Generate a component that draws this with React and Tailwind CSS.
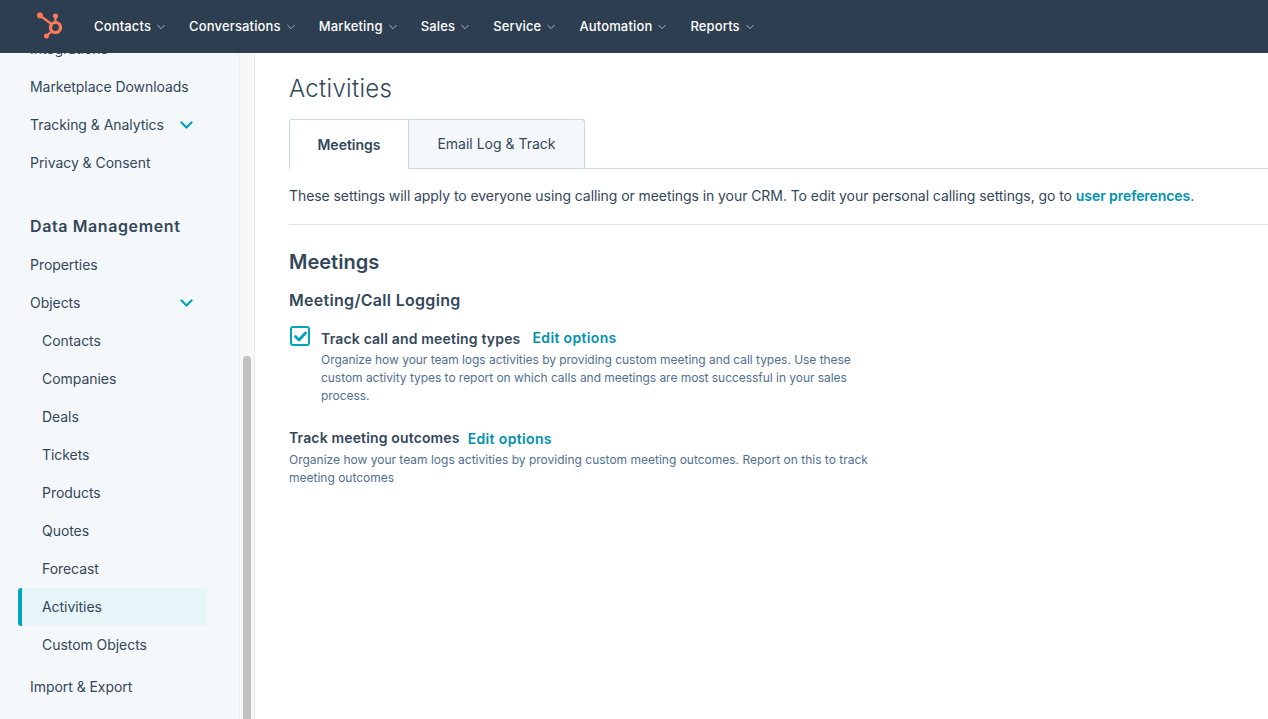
import React from 'react';

const navItems = ['Contacts', 'Conversations', 'Marketing', 'Sales', 'Service', 'Automation', 'Reports'];
const objectItems = ['Contacts', 'Companies', 'Deals', 'Tickets', 'Products', 'Quotes', 'Forecast'];

function Chevron({ className }) {
  return (
    <svg className={className} viewBox="0 0 12 8" fill="none">
      <path d="M1 1.5l5 5 5-5" stroke="currentColor" strokeLinecap="round" strokeLinejoin="round" strokeWidth={1.2} />
    </svg>
  );
}

function BoldChevron() {
  return (
    <svg className="w-[13px] h-[9px] text-[#00a4bd]" viewBox="0 0 13 9" fill="none">
      <path d="M1.5 1.5l5 5 5-5" stroke="currentColor" strokeLinecap="round" strokeLinejoin="round" strokeWidth={2.2} />
    </svg>
  );
}

function Logo() {
  return (
    <svg className="w-[30px] h-[30px] text-[#ff7a59]" viewBox="0 0 30 30" fill="none">
      <circle cx="20.5" cy="15.5" r="5" stroke="currentColor" strokeWidth="3.2" />
      <path d="M20.5 4v7M5 3.5l12 9M11.5 24l5.5-5" stroke="currentColor" strokeWidth="2.2" />
      <circle cx="20.5" cy="4" r="2.5" fill="currentColor" />
      <circle cx="5" cy="3.5" r="3" fill="currentColor" />
      <circle cx="11.5" cy="24" r="2.5" fill="currentColor" />
    </svg>
  );
}

function SideRow({ label, chevron }) {
  return (
    <div className="h-[38px] flex items-center justify-between pl-[30px] pr-[46px] text-sm tracking-[-0.05px] text-[#33475b]">
      <span>{label}</span>
      {chevron && <BoldChevron />}
    </div>
  );
}

function SubRow({ label, active }) {
  return (
    <div className={`h-[38px] w-[189px] ml-[18px] flex items-center text-sm tracking-[-0.05px] text-[#33475b] rounded-[3px] ${active ? 'bg-[#e5f5f8] border-l-4 border-[#00a4bd] pl-5' : 'pl-6'}`}>
      {label}
    </div>
  );
}

export default function App() {
  return (
    <div className="h-screen overflow-hidden flex flex-col bg-white font-['Inter',sans-serif] text-[#33475b]">
      <header className="h-[53px] shrink-0 bg-[#2d3e50] flex items-center pl-[35px] relative z-10">
        <Logo />
        <nav className="flex items-center gap-6 ml-[29px]">
          {navItems.map((item) => (
            <div key={item} className="flex items-center gap-[6px] text-[13px] font-medium tracking-[0.15px] text-white">
              {item}
              <Chevron className="w-2 h-[6px] text-[#cbd6e2] mt-px" />
            </div>
          ))}
        </nav>
      </header>

      <div className="flex flex-1 min-h-0">
        <aside className="w-[240px] shrink-0 bg-[#f5f8fa] border-r border-[#e8edf2] overflow-hidden">
          <div className="-mt-[23px]">
            <SideRow label="Integrations" />
            <SideRow label="Marketplace Downloads" />
            <SideRow label="Tracking & Analytics" chevron />
            <SideRow label="Privacy & Consent" />
            <div className="h-16 flex items-end pl-[30px] pb-2 text-base leading-6 tracking-[0.6px] font-semibold text-[#33475b]">Data Management</div>
            <SideRow label="Properties" />
            <SideRow label="Objects" chevron />
            {objectItems.map((item) => (
              <SubRow key={item} label={item} />
            ))}
            <SubRow label="Activities" active />
            <SubRow label="Custom Objects" />
            <div className="mt-1">
              <SideRow label="Import & Export" />
            </div>
          </div>
        </aside>

        <div className="w-[15px] shrink-0 bg-[#f7f7f7] border-r border-[#e6eaee] pt-[303px] px-[3px]">
          <div className="h-full w-2 bg-[#c1c1c1] rounded-t" />
        </div>

        <main className="flex-1 min-w-0 pl-[34px] pt-5">
          <h1 className="text-2xl leading-8 font-light tracking-[0.3px] text-[#33475b]">Activities</h1>

          <div className="flex mt-[14px] h-[50px] border-b border-[#cbd6e2]">
            <div className="w-[120px] h-[50px] flex items-center justify-center bg-white border border-b-0 border-[#cbd6e2] rounded-tl-[3px] text-sm font-semibold">
              Meetings
            </div>
            <div className="w-[176px] h-[49px] flex items-center justify-center bg-[#f5f8fa] border-t border-r border-[#cbd6e2] rounded-tr-[3px] text-sm">
              Email Log &amp; Track
            </div>
          </div>

          <p className="mt-[17px] text-sm leading-5 tracking-[-0.07px]">
            These settings will apply to everyone using calling or meetings in your CRM. To edit your personal calling settings, go to{' '}
            <a className="font-semibold text-[#0091ae]">user preferences</a>.
          </p>
          <div className="mt-[18px] border-t border-[#dfe3eb]" />

          <h2 className="mt-[23px] text-xl leading-7 font-semibold">Meetings</h2>
          <h3 className="mt-3 text-base leading-6 font-semibold tracking-[0.3px]">Meeting/Call Logging</h3>

          <div className="flex mt-[14px]">
            <div className="w-5 h-5 ml-px rounded-[3px] border-[2.5px] border-[#00a4bd] bg-white flex items-center justify-center shrink-0">
              <svg className="w-[13px] h-[11px] text-[#00a4bd]" viewBox="0 0 13 11" fill="none">
                <path d="M1.5 5.5l3.5 3.5 6.5-7" stroke="currentColor" strokeLinecap="round" strokeLinejoin="round" strokeWidth={2.8} />
              </svg>
            </div>
            <div className="ml-[11px] mt-[2px] w-[550px]">
              <div className="flex items-center h-[22px]">
                <span className="text-sm font-semibold tracking-[0.18px]">Track call and meeting types</span>
                <a className="ml-3 text-sm font-semibold tracking-[0.35px] text-[#0091ae] -mt-[2px]">Edit options</a>
              </div>
              <p className="mt-[1px] text-xs leading-[18px] tracking-[-0.04px] text-[#516f90]">
                Organize how your team logs activities by providing custom meeting and call types. Use these custom activity types to report on which calls and meetings are most successful in your sales process.
              </p>
            </div>
          </div>

          <div className="flex items-center h-[22px] mt-[22px]">
            <span className="text-sm font-semibold tracking-[0.15px]">Track meeting outcomes</span>
            <a className="ml-2 mt-[2px] text-sm font-semibold tracking-[0.35px] text-[#0091ae]">Edit options</a>
          </div>
          <p className="mt-[2px] w-[590px] text-xs leading-[18px] text-[#516f90]">
            Organize how your team logs activities by providing custom meeting outcomes. Report on this to track meeting outcomes
          </p>
        </main>
      </div>
    </div>
  );
}
